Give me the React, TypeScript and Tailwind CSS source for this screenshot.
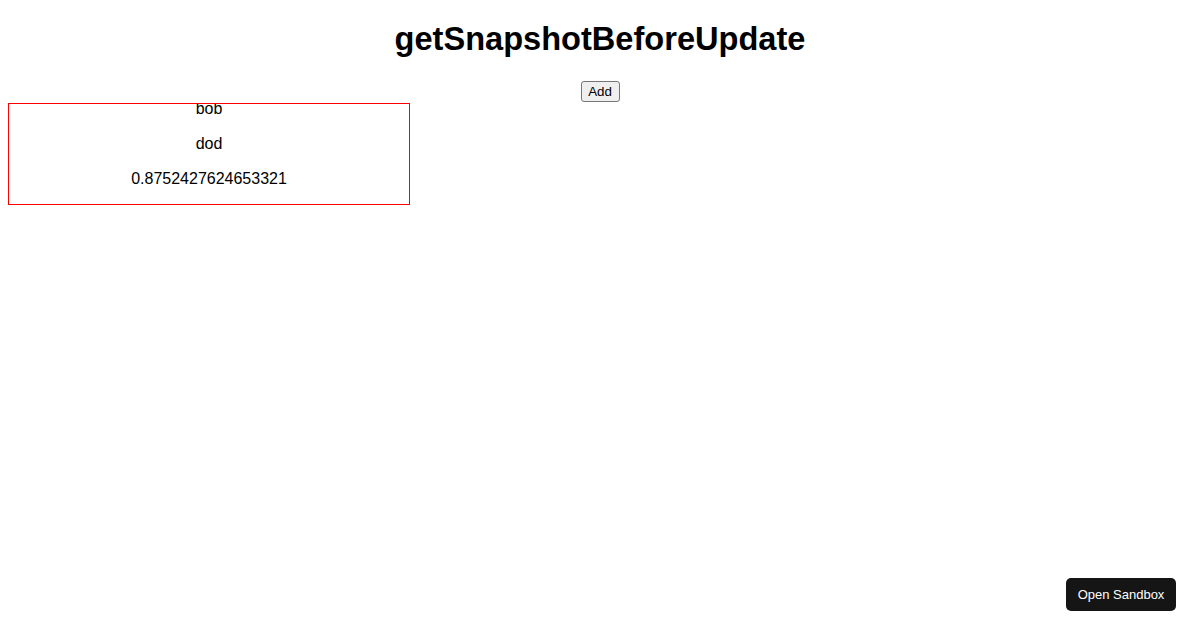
import React from 'react';

export default function App() {
  const items = ['bob', 'dod', '0.8752427624653321'];

  return (
    <div className="min-h-[630px] bg-white px-2 text-black font-['Liberation_Sans',Arial,sans-serif]">
      <h1 className="pt-[21.44px] pb-[21.44px] text-center text-[32.6px] leading-[36.8px] font-bold">
        getSnapshotBeforeUpdate
      </h1>

      <div className="flex justify-center pt-[1px] pb-[1px]">
        <button className="h-[21px] w-[39px] rounded-[3px] border border-[#767676] bg-[#efefef] text-[13.33px] leading-[15px] text-black">
          Add
        </button>
      </div>

      {/* scrolled list box */}
      <div className="h-[102px] w-[402px] overflow-hidden border border-[#ff0000] text-center text-base leading-[19px]">
        <div className="-mt-[5px]">
          {items.map((item, i) => (
            <p key={item} className={i === 0 ? 'mb-4' : 'my-4'}>
              {item}
            </p>
          ))}
        </div>
      </div>

      {/* floating sandbox button */}
      <button className="fixed bottom-[19px] right-[24px] h-[33px] w-[110px] rounded-[5px] bg-[#151515] text-[13px] text-white">
        Open Sandbox
      </button>
    </div>
  );
}
